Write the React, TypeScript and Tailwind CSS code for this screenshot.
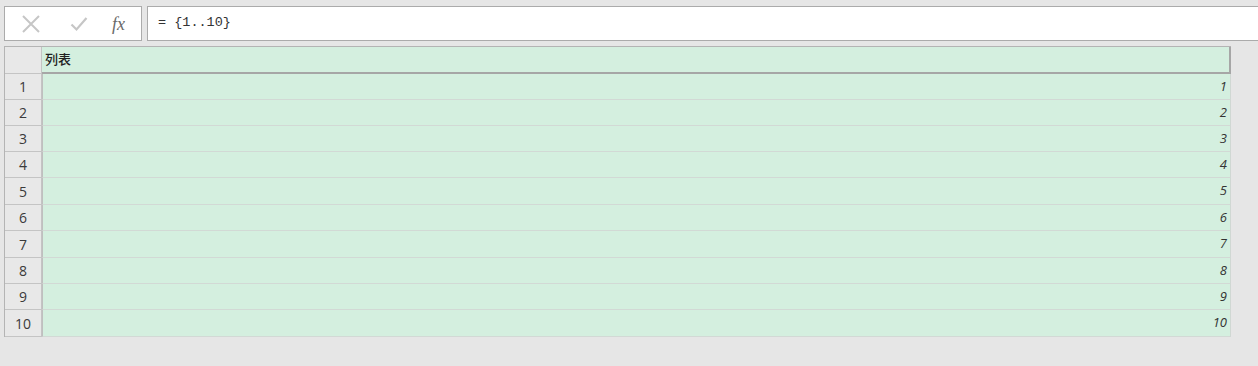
const rows = [1, 2, 3, 4, 5, 6, 7, 8, 9, 10];
const heights = ['h-[26px]', 'h-[26px]', 'h-[26px]', 'h-[26px]', 'h-[27px]', 'h-[26px]', 'h-[27px]', 'h-[26px]', 'h-[26px]', 'h-[27px]'];

export default function App() {
  return (
    <div className="w-[1258px] h-[366px] bg-[#e6e6e6] overflow-hidden font-['Open_Sans','Noto_Sans_CJK_SC',sans-serif] text-[#333]">
      {/* formula bar */}
      <div className="flex pt-[6px] pl-[4px] gap-[5px]">
        <div className="w-[138px] h-[35px] bg-white border border-[#ababab] flex items-center">
          <svg width="22" height="22" viewBox="0 0 22 22" className="ml-[15px]">
            <path d="M3 3 L19 19 M19 3 L3 19" stroke="#c6c6c6" strokeWidth="2" fill="none" />
          </svg>
          <svg width="20" height="20" viewBox="0 0 20 20" className="ml-[27px]">
            <path d="M2.5 10.5 L7.5 15.5 L17.5 4" stroke="#c6c6c6" strokeWidth="2.2" fill="none" />
          </svg>
          <span className="ml-[23px] italic text-[18px] text-[#6a6a6a] font-['Liberation_Serif',serif] leading-none">
            fx
          </span>
        </div>
        <div className="flex-1 h-[35px] bg-white border border-r-0 border-[#ababab] flex items-center pl-[10px]">
          <span className="text-[13.5px] font-['Liberation_Mono',monospace] text-[#333]">= {'{1..10}'}</span>
        </div>
      </div>

      {/* table */}
      <div className="ml-[4px] mt-[5px] w-[1227px] border-t border-l border-[#b4b4b4]">
        <div className="flex h-[27px]">
          <div className="w-[37px] bg-[#e8e8e8] border-r border-b border-[#c4c4c4]" />
          <div className="flex-1 bg-[#d4efdf] border-r-2 border-b-2 border-[#a6a6a6] pl-[3px] flex items-center pb-[2px]">
            <span className="text-[13px] font-medium font-['Noto_Sans_CJK_SC',sans-serif] text-[#222]">列表</span>
          </div>
        </div>
        {rows.map((n, i) => (
          <div key={n} className={`flex ${heights[i]}`}>
            <div className="w-[37px] bg-[#e8e8e8] border-r border-b border-[#c4c4c4] flex items-center justify-center text-[14px] text-[#3a3a3a]">
              {n}
            </div>
            <div className="flex-1 bg-[#d4efdf] border-r border-b border-b-[#d2d9d5] border-r-[#d0d8d3] border-l border-l-[#bfbfbf] flex items-center justify-end pr-[3px]">
              <span className="italic text-[13px] text-[#333]">{n}</span>
            </div>
          </div>
        ))}
      </div>
    </div>
  );
}
